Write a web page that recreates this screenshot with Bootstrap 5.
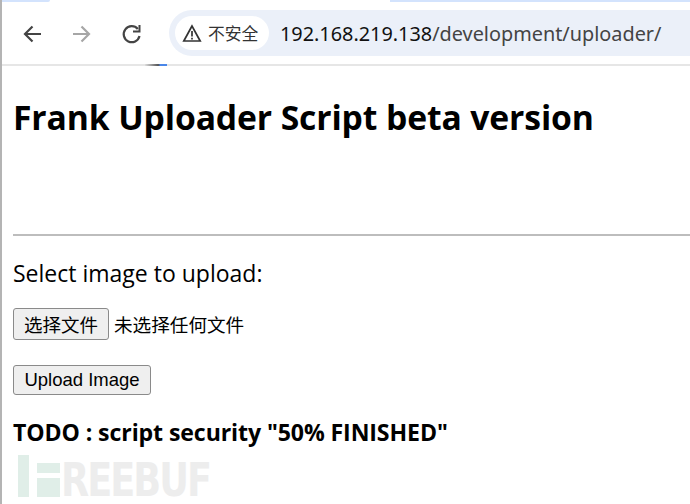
<!DOCTYPE html>
<html lang="zh">
<head>
<meta charset="utf-8">
<title>Frank Uploader</title>
<link href="https://cdn.jsdelivr.net/npm/bootstrap@5.3.0/dist/css/bootstrap.min.css" rel="stylesheet">
<style>
html,body{height:100%;overflow:hidden;background:#fff}
body{font-family:"Open Sans","Noto Sans CJK SC",sans-serif;color:#000}
.shot{height:504px;width:690px;border-left:2px solid #b4b4b4;position:relative;overflow:hidden}
.tabstrip{height:2px}
.tab-a{width:48px;background:#d3e3fd;border-bottom-right-radius:3px}
.tab-b{background:#d3e3fd;margin-left:340px}
.toolbar{height:64px;padding-top:8px;border-bottom:2px solid #e6e6e6}
.navicon{width:24px;height:24px;flex:none;margin-top:12px}
.nav-back{margin-left:18px}
.nav-fwd{margin-left:26px}
.nav-reload{margin-left:26px}
.omnibox{height:46px;background:#ebf0f9;border-radius:23px 0 0 23px;margin-left:25px;padding-left:6px;flex:1}
.chip{height:34px;width:94px;border-radius:17px;background:#fff;font:16.8px "Noto Sans CJK SC",sans-serif;color:#333;gap:6px;padding-left:7px;white-space:nowrap}
.urltext{font:19.85px "Noto Sans","Open Sans",sans-serif;margin-left:11px;color:#444;white-space:nowrap}
.urltext b{font-weight:400;color:#111}
.loadbar{position:absolute;left:143px;top:64px;width:22px;height:2px;background:linear-gradient(90deg,#ddd,#555 60%,#4a86e8 70%)}
.content{padding:0 0 0 11px}
.title{font:700 33.7px/40px "Open Sans",sans-serif;margin:31px 0 0 0;white-space:nowrap;letter-spacing:-.12px}
.rule{border:0;border-top:2px solid #bdbdbd;opacity:1;margin:97px 0 0 0}
.prompt{font-size:23px;line-height:30px;margin:22px 0 0 0}
.filerow{margin-top:19px;height:33px}
.nativebtn{font:18.5px "Liberation Sans",sans-serif;background:#efefef;border:1px solid #8a8a8a;border-radius:3px;color:#000;padding:0;height:32px;line-height:30px}
.pick{width:96px;font-family:"Noto Sans CJK SC",sans-serif}
.upl{width:138px;height:30px;line-height:28px}
.nofile{font:18.6px "Noto Sans CJK SC",sans-serif;margin-left:5px}
.uplrow{margin-top:25px}
.todo{font:700 23.1px/30px "Open Sans",sans-serif;margin:22px 0 0 0;white-space:nowrap;letter-spacing:-.1px}
.wm{position:absolute;left:16px;top:455px;width:290px;height:42px;pointer-events:none}
.wm-text{position:absolute;left:43px;top:2px;font:900 46.6px/46px "DejaVu Sans",sans-serif;color:#ededed;letter-spacing:-2.5px;white-space:nowrap;transform:scaleX(.785);transform-origin:left top}
</style>
</head>
<body>
<div class="shot">
  <div class="tabstrip d-flex">
    <div class="tab-a"></div>
    <div class="tab-b flex-grow-1"></div>
  </div>
  <div class="toolbar d-flex align-items-start">
    <svg class="navicon nav-back" viewBox="0 0 24 24" fill="none" stroke="#444" stroke-width="2.2"><path d="M21 12H5M12.5 4.5 5 12l7.5 7.5"/></svg>
    <svg class="navicon nav-fwd" viewBox="0 0 24 24" fill="none" stroke="#a6a6a6" stroke-width="2.2"><path d="M3 12h16M11.5 4.5 19 12l-7.5 7.5"/></svg>
    <svg class="navicon nav-reload" viewBox="0 0 24 24" fill="none" stroke="#444" stroke-width="2.2"><path d="M19.5 14a8 8 0 1 1-1.7-7"/><path d="M19.5 3v6.5H13" stroke-width="2"/></svg>
    <div class="omnibox d-flex align-items-center">
      <div class="chip d-flex align-items-center">
        <svg width="20" height="19" viewBox="0 0 20 19" fill="none" stroke="#333" stroke-width="1.7"><path d="M10 2 1.8 17h16.4z"/><path d="M10 7v5.5M10 13.8v1.7"/></svg>
        <span>不安全</span>
      </div>
      <div class="urltext"><b>192.168.219.138</b>/development/uploader/</div>
    </div>
  </div>
  <div class="loadbar"></div>
  <main class="content">
    <h1 class="title">Frank Uploader Script beta version</h1>
    <hr class="rule">
    <p class="prompt">Select image to upload:</p>
    <div class="filerow d-flex align-items-center">
      <button type="button" class="nativebtn pick">选择文件</button>
      <span class="nofile">未选择任何文件</span>
    </div>
    <div class="uplrow"><button type="button" class="nativebtn upl">Upload Image</button></div>
    <h4 class="todo">TODO : script security "50% FINISHED"</h4>
  </main>
  <div class="wm">
    <svg width="52" height="42" viewBox="0 0 52 42" class="position-absolute top-0 start-0"><g fill="#e0eee8"><rect x="0" y="0" width="11" height="42"/><rect x="19" y="8" width="23" height="10"/><rect x="19" y="23" width="23" height="19"/></g></svg>
    <span class="wm-text">REEBUF</span>
  </div>
</div>
<script src="https://cdn.jsdelivr.net/npm/bootstrap@5.3.0/dist/js/bootstrap.bundle.min.js"></script>
</body>
</html>
